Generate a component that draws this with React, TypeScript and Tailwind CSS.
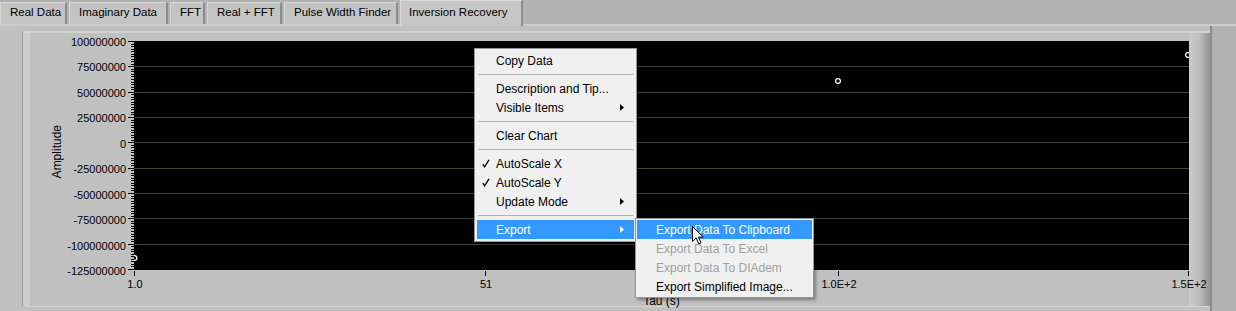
import React from 'react';

const tabs = [
  { label: 'Real Data', w: 'w-[67px]' },
  { label: 'Imaginary Data', w: 'w-[99px]' },
  { label: 'FFT', w: 'w-[35px]' },
  { label: 'Real + FFT', w: 'w-[75px]' },
  { label: 'Pulse Width Finder', w: 'w-[114px]' },
];

const yLabels = [
  '100000000',
  '75000000',
  '50000000',
  '25000000',
  '0',
  '-25000000',
  '-50000000',
  '-75000000',
  '-100000000',
  '-125000000',
];

const STEP = 228 / 9;

const xTicks = [
  { x: 0, label: '1.0' },
  { x: 351, label: '51' },
  { x: 704, label: '1.0E+2' },
  { x: 1054, label: '1.5E+2' },
];

function Tri({ color }: { color: string }) {
  return (
    <svg width="4" height="7" viewBox="0 0 4 7" className="block">
      <path d="M0 0 L4 3.5 L0 7 Z" fill={color} />
    </svg>
  );
}

function Check() {
  return (
    <svg width="8" height="9" viewBox="0 0 8 9" className="block">
      <path d="M0.8 5 L2.6 7.8 L7 0.8" fill="none" stroke="#000" strokeWidth="1.3" />
    </svg>
  );
}

function Item({
  label,
  check,
  sub,
  active,
  disabled,
}: {
  label: string;
  check?: boolean;
  sub?: boolean;
  active?: boolean;
  disabled?: boolean;
}) {
  return (
    <div
      className={
        'relative flex h-[19px] items-center pl-[19px] whitespace-nowrap ' +
        (active ? 'bg-[#3399ff] text-white ' : '') +
        (disabled ? 'text-[#a0a0a0] ' : '')
      }
    >
      {check && (
        <span className="absolute left-[5px] top-[5px]">
          <Check />
        </span>
      )}
      {label}
      {sub && (
        <span className="absolute right-[10px] top-[6px]">
          <Tri color={active ? '#ffffff' : '#000000'} />
        </span>
      )}
    </div>
  );
}

function Sep() {
  return (
    <div className="flex h-[9px] flex-col justify-center px-px">
      <div className="h-px bg-[#b2b2b2]" />
    </div>
  );
}

export default function App() {
  const majors = Array.from({ length: 10 }, (_, i) => i);
  const minors = Array.from({ length: 91 }, (_, j) => j).filter((j) => j % 10 !== 0);
  return (
    <div className="relative h-[311px] w-[1236px] overflow-hidden bg-[#b2b2b2] font-['Liberation_Sans',Arial,sans-serif] text-black">
      {/* Tabs */}
      <div className="flex h-[24px] items-start text-[11.5px]">
        {tabs.map((t) => (
          <div
            key={t.label}
            className={
              t.w +
              ' mr-[2px] mt-[2px] flex h-[22px] items-center whitespace-nowrap border-l border-t border-r-2 border-l-[#d6d6d6] border-t-[#d6d6d6] border-r-[#8c8c8c] bg-[#c4c4c4] pl-[9px] pb-[1px]'
            }
          >
            {t.label}
          </div>
        ))}
        <div className="relative z-10 flex h-[26px] w-[123px] items-start whitespace-nowrap border-l border-t border-r-2 border-l-[#dadada] border-t-[#dadada] border-r-[#8c8c8c] bg-[#c6c6c6] pl-[8px] pt-[3px]">
          Inversion Recovery
        </div>
      </div>

      {/* Body */}
      <div className="flex h-[287px] border-t-2 border-[#cdcdcd]">
        <div className="h-full w-[1212px] border-r-2 border-[#8a8a8a] bg-[#c1c1c1] pl-[22px] pt-[5px]">
          {/* Graph frame */}
          <div className="flex h-[275px] w-[1188px] border-l border-[#9c9c9c]">
            <div className="w-[7px] border-t-2 border-[#d4d4d4] bg-[#cdcdcd]" />
            <div className="flex flex-1 flex-col border-t-2 border-[#d2d2d2] bg-[#c0c0c0] pt-[8px]">
              <div className="flex h-[229px]">
                <div className="flex w-[104px]">
                  <div className="ml-[17px] flex w-[20px] items-center justify-center pb-[8px]">
                    <span className="rotate-180 text-[12px] leading-[20px] [writing-mode:vertical-rl]">
                      Amplitude
                    </span>
                  </div>
                  <div className="-mt-[6px] flex h-[243px] flex-1 flex-col justify-between pr-[2px] text-right text-[11px] leading-[14px]">
                    {yLabels.map((l) => (
                      <div key={l}>{l}</div>
                    ))}
                  </div>
                  <svg width="6" height="229" className="block overflow-visible" shapeRendering="crispEdges">
                    {majors.map((i) => (
                      <line key={'M' + i} x1="0" x2="6" y1={Math.round(i * STEP) + 0.5} y2={Math.round(i * STEP) + 0.5} stroke="#000" />
                    ))}
                    {minors.map((j) => (
                      <line key={'m' + j} x1="3" x2="6" y1={Math.round((j * STEP) / 10) + 0.5} y2={Math.round((j * STEP) / 10) + 0.5} stroke="#000" />
                    ))}
                  </svg>
                </div>
                <svg width="1055" height="229" className="block" shapeRendering="crispEdges">
                  <rect x="0" y="0" width="1055" height="229" fill="#000" />
                  {[1, 2, 3, 4, 5, 6, 7, 8].map((i) => (
                    <line key={i} x1="0" x2="1055" y1={Math.round(i * STEP) + 0.5} y2={Math.round(i * STEP) + 0.5} stroke="#39482f" />
                  ))}
                  <g shapeRendering="auto" fill="none" stroke="#fff" strokeWidth="1.2">
                    <circle cx="704" cy="40" r="2.4" />
                    <circle cx="1054" cy="14" r="2.4" />
                    <circle cx="0.5" cy="217" r="2.4" />
                  </g>
                </svg>
              </div>
              <div className="flex h-[36px]">
                <div className="w-[104px]" />
                <div className="relative w-[1055px]">
                  <svg width="1055" height="6" className="block" shapeRendering="crispEdges">
                    {xTicks.map((t) => (
                      <line key={t.label} x1={t.x + 0.5} x2={t.x + 0.5} y1="1" y2="6" stroke="#000" />
                    ))}
                  </svg>
                  {xTicks.map((t) => (
                    <div
                      key={t.label}
                      className="absolute top-[7px] -translate-x-1/2 whitespace-nowrap text-[11px] leading-[14px]"
                      style={{ left: t.x + 1 }}
                    >
                      {t.label}
                    </div>
                  ))}
                  <div className="absolute left-0 right-0 top-[24px] text-center text-[12px] leading-[14px]">
                    Tau (s)
                  </div>
                </div>
              </div>
            </div>
            <div className="w-[21px] border-t-2 border-[#d2d2d2] bg-gradient-to-r from-[#cbcbcb] via-[#bdbdbd] to-[#939393]" />
          </div>
          <div className="ml-[3px] h-px bg-[#d6d6d6]" />
        </div>
        <div className="flex-1" />
      </div>

      {/* Context menu */}
      <div className="absolute left-[474px] top-[48px] z-20 w-[163px] border border-[#979797] bg-[#f0f0f0] p-[2px] text-[12px] shadow-[2px_2px_3px_rgba(0,0,0,0.35)]">
        <Item label="Copy Data" />
        <Sep />
        <Item label="Description and Tip..." />
        <Item label="Visible Items" sub />
        <Sep />
        <Item label="Clear Chart" />
        <Sep />
        <Item label="AutoScale X" check />
        <Item label="AutoScale Y" check />
        <Item label="Update Mode" sub />
        <Sep />
        <Item label="Export" sub active />
      </div>

      {/* Submenu */}
      <div className="absolute left-[635px] top-[218px] z-30 w-[179px] border border-[#979797] bg-[#f0f0f0] p-px text-[12px] shadow-[2px_2px_3px_rgba(0,0,0,0.35)]">
        <Item label="Export Data To Clipboard" active />
        <Item label="Export Data To Excel" disabled />
        <Item label="Export Data To DIAdem" disabled />
        <Item label="Export Simplified Image..." />
      </div>

      {/* Cursor */}
      <svg width="13" height="20" viewBox="0 0 13 20" className="absolute left-[692px] top-[226px] z-40">
        <path
          d="M0.5 0.5 L0.5 15.5 L4.2 11.9 L6.8 17.8 L9 16.8 L6.5 11.1 L11.3 11.1 Z"
          fill="#fff"
          stroke="#000"
          strokeWidth="1"
        />
      </svg>
    </div>
  );
}
